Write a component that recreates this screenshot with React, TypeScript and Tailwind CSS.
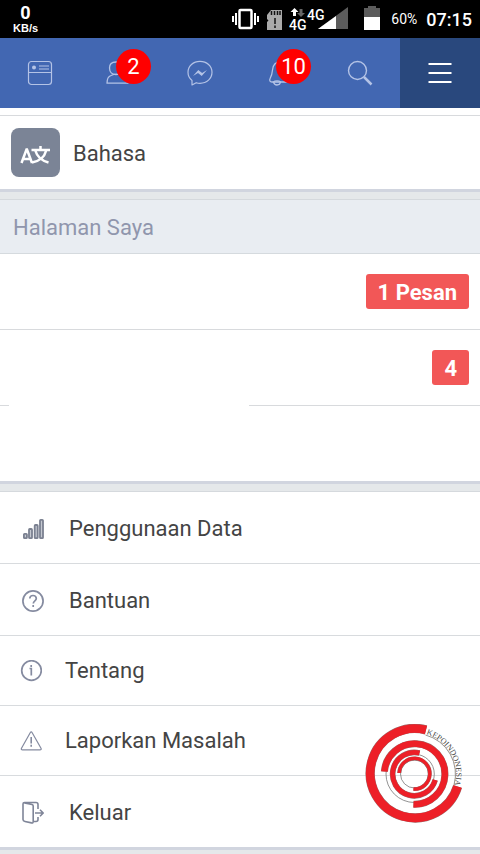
import React from 'react';

interface MenuItem {
  label: string;
  icon: React.ReactNode;
  className: string;
}

const FeedIcon = () => (
  <svg width="26" height="26" viewBox="0 0 26 26" fill="none" stroke="#b4c3e6" strokeWidth="1.2">
    <rect x="1.5" y="1.5" width="23" height="23" rx="3" />
    <path d="M1.5 12.5h23M12 6h10M12 9h10" />
    <circle cx="7" cy="7.5" r="2" fill="#b4c3e6" stroke="none" />
  </svg>
);

const FriendsIcon = () => (
  <svg width="26" height="26" viewBox="0 0 26 26" fill="none" stroke="#b4c3e6" strokeWidth="1.3">
    <path d="M6 15.500C3 16.500 2 19 2 23.200h21C23 18 20.500 16 17 15.500c-3-1.500-8-1.500-11 0z" strokeLinejoin="round" />
    <path d="M4.500 8C4.500 4 6.500 2 11 2s6.500 2 6.500 6-2.500 6.500-6.500 6.500S4.500 12 4.500 8z" />
  </svg>
);

const MessengerIcon = () => (
  <svg width="26" height="26" viewBox="0 0 26 26" fill="none" stroke="#b4c3e6" strokeWidth="1.2">
    <path d="M5 20.500v4.500l4.200-2.300c1.200.4 2.500.6 3.800.6 6.800 0 12-4.700 12-11S19.800 1.300 13 1.300 1 6 1 12.300c0 3.300 1.500 6.200 4 8.200z" strokeLinejoin="round" />
    <path d="M6 16l5.300-6 3.800 3L20 10l-5.300 6-3.700-3z" fill="#b4c3e6" stroke="none" />
  </svg>
);

const BellIcon = () => (
  <svg width="26" height="26" viewBox="0 0 26 26" fill="none" stroke="#b4c3e6" strokeWidth="1.3">
    <path d="M13 2C8 2 6 5 5.500 10c-.4 4-1 6-2.200 8C2 20.500 3 22 5 22h16c2 0 3-1.500 1.700-4-1.200-2-1.800-4-2.200-8-.5-5-2.500-8-7.500-8z" />
    <path d="M6.500 22c.5 2 1.700 3 3.500 3s3.200-1 3.500-3c-1.500-1.600-5.500-1.600-7 0z" />
  </svg>
);

const SearchIcon = () => (
  <svg width="26" height="26" viewBox="0 0 26 26" fill="none" stroke="#b4c3e6">
    <circle cx="10.500" cy="10.500" r="9" strokeWidth="1.4" />
    <path d="M17 17l7.500 7.500" strokeWidth="2.500" />
  </svg>
);

const HamburgerIcon = () => (
  <svg width="24" height="22" viewBox="0 0 24 22" stroke="#fff" strokeWidth="2">
    <path d="M0.500 2h23M0.500 11h23M0.500 20h23" />
  </svg>
);

const LanguageIcon = () => (
  <svg width="49" height="49" viewBox="0 0 49 49" fill="none" stroke="#fff" strokeWidth="2.500">
    <path d="M10.500 35l5-13.500h.5l5 13.500M12.500 31h6.500" />
    <path d="M20.500 22h18.500M29.500 18v4M24.500 23c1.500 5.500 6 9.500 13 11.500M35 23c-1.500 6-6.500 10-14 11.500" />
  </svg>
);

const DataIcon = () => (
  <svg width="22" height="22" viewBox="0 0 22 22" fill="#c4c8d0" stroke="#7b8191" strokeWidth="1.800">
    <rect x="1.900" y="15.800" width="3" height="4.300" rx=".7" />
    <rect x="7" y="11" width="3" height="9.100" rx=".7" />
    <rect x="12.700" y="7" width="3" height="13.100" rx=".7" />
    <rect x="18" y="1.800" width="3" height="18.300" rx=".7" />
  </svg>
);

const HelpIcon = () => (
  <svg width="22" height="22" viewBox="0 0 22 22" fill="none" stroke="#858ba0" strokeWidth="1.700">
    <circle cx="11" cy="11" r="10.100" />
    <path d="M7.800 8.500c0-1.700 1.200-3 3.200-3s3.300 1.200 3.300 2.900c0 2.400-3 2.400-3 5.100M11.200 15v2" />
  </svg>
);

const InfoIcon = () => (
  <svg width="22" height="22" viewBox="0 0 22 22" fill="none" stroke="#858ba0" strokeWidth="1.700">
    <circle cx="11.500" cy="10.500" r="9.800" />
    <path d="M9.500 8.500h1.800v7M11.200 5v2" />
  </svg>
);

const WarningIcon = () => (
  <svg width="22" height="22" viewBox="0 0 22 22" fill="none" stroke="#858ba0" strokeWidth="1.200">
    <path d="M10.200 2.700c.6-1 1.400-1 2 0l8.800 15.500c.5 1 0 1.700-1 1.700H2.500c-1 0-1.500-.7-1-1.700z" />
    <path d="M11.200 7v6.500M11.200 14.800v2" strokeWidth="1.600" />
  </svg>
);

const LogoutIcon = () => (
  <svg width="22" height="24" viewBox="0 0 22 24" fill="none" stroke="#7f8598" strokeWidth="1.600" strokeLinejoin="round">
    <path d="M2.500 2l7.500 1.500c.8.2 1.200.7 1.200 1.500v15.500c0 1.200-.6 1.700-1.700 1.400l-6.500-1.400c-1.300-.3-2-.9-2-2V3c0-1 .5-1.500 1.500-1.500H14c1.300 0 2 .6 2 2V8M11.500 20.500H14c1.300 0 2-.6 2-2V16" />
    <path d="M13 12h8M18 8.800l3.200 3.200-3.200 3.200" />
  </svg>
);

const rings = [
  { d: 'M61 5.900A44.700 44.700 0 1 0 92.600 62.500', width: 8.5 },
  { d: 'M19.400 47.500A30.300 30.300 0 1 1 48.500 80.300', width: 6.3 },
  { d: 'M54.500 29A21.700 21.700 0 1 0 70.200 56', width: 4.8 },
  { d: 'M34.200 49A15.300 15.300 0 1 1 48.500 65', width: 3.2 },
];

// Concentric ring emblem with its name set along the outer edge
const Emblem = () => (
  <svg
    role="img"
    aria-label="Kepoindonesia"
    className="absolute right-[15px] bottom-[23px]"
    width="100"
    height="100"
    viewBox="0 0 100 100"
    fill="none"
  >
    <g stroke="#777" strokeWidth=".8">
      <path d="M60.500 11A40.500 40.500 0 0 1 89 61" />
      <circle cx="49.500" cy="50" r="28.500" />
      <circle cx="49.500" cy="50" r="19.800" />
      <circle cx="49.500" cy="50" r="14" />
    </g>
    {rings.map((ring) => (
      <g key={ring.d}>
        <path d={ring.d} stroke="#9a6a6a" strokeWidth={ring.width + 0.8} />
        <path d={ring.d} stroke="#ed1f27" strokeWidth={ring.width} />
      </g>
    ))}
    <path id="emblem-arc" d="M61.300 10.200A41.500 41.500 0 0 1 87 68" />
    <text fill="#444" className="font-['Liberation_Serif',serif] text-[8px]">
      <textPath href="#emblem-arc">KEPOINDONESIA</textPath>
    </text>
  </svg>
);

const StatusBar = () => (
  <header className="flex h-[38px] items-center justify-between bg-black pr-2 pl-[13px] text-white">
    <div className="flex flex-col items-center">
      <span className="text-[18px] leading-[18px] font-bold">0</span>
      <span className="font-['Liberation_Sans',sans-serif] text-[11px] leading-3 font-bold">KB/s</span>
    </div>
    <div className="flex items-center">
      <svg className="mr-2" width="27" height="24" viewBox="0 0 27 24" fill="none" stroke="#fff">
        <rect x="7.500" y="3" width="12" height="18" rx="1" strokeWidth="2.500" />
        <path d="M4 6v12M23 6v12" strokeWidth="2" />
        <path d="M1 9v6M26 9v6" strokeWidth="2" />
      </svg>
      <svg className="mr-[7px]" width="15" height="24" viewBox="0 0 15 24">
        <path d="M4 3h11v20H0v-8l1.500-1.500L0 12V8z" fill="#aaa" />
        <path d="M4.500 4v4M7.500 4v4M10.500 4v4M13 4v4M8 11v6M8 18.500v2.500" stroke="#111" strokeWidth="1.500" />
      </svg>
      <svg className="mr-4" width="59" height="30" viewBox="0 0 59 30" fill="#fff">
        <path d="M5.500 4l4 4H7v4H4V8H1.500z" />
        <path d="M10.500 5h3v4h2.500l-4 4-4-4h2.500z" fill="#666" />
        <path d="M59 3v22H29z" fill="#5c5c5c" />
        <path d="M47 12v13H29z" />
        <text x="0" y="26" className="font-[Roboto,sans-serif] text-[14px] font-medium">4G</text>
        <text x="18" y="16" className="font-[Roboto,sans-serif] text-[14px] font-medium">4G</text>
      </svg>
      <svg className="mr-[11px]" width="16" height="26" viewBox="0 0 16 26">
        <path d="M4 0h8v2h4v9H0V2h4z" fill="#5c5c5c" />
        <path d="M0 11h16v13H0z" fill="#fff" />
      </svg>
      <span className="mr-[9px] text-[14px] leading-5">60%</span>
      <span className="pt-px text-[18px] leading-5 font-medium">07:15</span>
    </div>
  </header>
);

const Badge = ({ count, className }: { count: number; className: string }) => (
  <span
    className={`absolute top-[11px] flex size-[35px] items-center justify-center rounded-full bg-[#ff0000] text-[22px] leading-none text-white ${className}`}
  >
    {count}
  </span>
);

const NavBar = () => {
  const tab = 'relative flex h-full items-center justify-center';

  return (
    <nav className="grid h-[70px] grid-cols-6 bg-[#4267b2]">
      <button className={tab} aria-label="Kabar Berita">
        <FeedIcon />
      </button>
      <button className={`${tab} pr-1`} aria-label="Permintaan Pertemanan">
        <FriendsIcon />
        <Badge count={2} className="left-9" />
      </button>
      <button className={tab} aria-label="Pesan">
        <MessengerIcon />
      </button>
      <button className={tab} aria-label="Pemberitahuan">
        <BellIcon />
        <Badge count={10} className="left-9" />
      </button>
      <button className={tab} aria-label="Cari">
        <SearchIcon />
      </button>
      <button className={`${tab} bg-[#29487d]`} aria-label="Menu">
        <HamburgerIcon />
      </button>
    </nav>
  );
};

const Separator = () => (
  <div className="h-[11px] border-t-[3px] border-b border-t-[#d1d5df] border-b-[#d5d9dd] bg-[#e5e8ea]" />
);

const Counter = ({ children }: { children: React.ReactNode }) => (
  <span className="rounded-[3px] bg-[#f25757] px-3 pt-[3px] text-[22px] leading-8 font-bold text-white">
    {children}
  </span>
);

const menuItems: MenuItem[] = [
  { label: 'Penggunaan Data', icon: <DataIcon />, className: 'h-[72px] border-b pt-0.5 pl-[22px] gap-[25px]' },
  { label: 'Bantuan', icon: <HelpIcon />, className: 'h-[72px] border-b pt-0.5 pl-[22px] gap-[25px]' },
  { label: 'Tentang', icon: <InfoIcon />, className: 'h-[70px] border-b pl-5 gap-[23px]' },
  { label: 'Laporkan Masalah', icon: <WarningIcon />, className: 'h-[70px] border-b pl-5 gap-[23px]' },
  { label: 'Keluar', icon: <LogoutIcon />, className: 'h-[71px] pt-0.5 pl-[22px] gap-[25px]' },
];

export default function App() {
  return (
    <div className="min-h-screen bg-[#e5e8ea] font-[Roboto,sans-serif] text-[22px] leading-7 text-[#444]">
      <StatusBar />
      <NavBar />

      <main>
        <div className="border-b border-[#d8dadd] bg-white pt-[7px]" />
        <a href="#bahasa" className="flex h-[73px] items-center gap-[13px] bg-white pl-[11px]">
          <span className="rounded-lg bg-[#7b8496]">
            <LanguageIcon />
          </span>
          <span className="pt-0.5">Bahasa</span>
        </a>
        <Separator />

        <section>
          <h2 className="h-[54px] border-b border-[#d5dade] bg-[#e9edf2] pt-px pl-[13px] leading-[54px] text-[#9096ad]">
            Halaman Saya
          </h2>
          <div className="flex h-[76px] items-center justify-end border-b border-[#d8dadd] bg-white pr-[11px]">
            <Counter>1 Pesan</Counter>
          </div>
          <div className="flex h-[75px] items-center justify-end bg-white pr-[11px]">
            <Counter>4</Counter>
          </div>
          <div className="flex h-px justify-between bg-white">
            <div className="w-[9px] bg-[#d8dadd]" />
            <div className="ml-[240px] flex-1 bg-[#d8dadd]" />
          </div>
          <div className="h-[75px] bg-white" />
        </section>
        <Separator />

        <section className="relative bg-white">
          {menuItems.map((item) => (
            <a
              key={item.label}
              href="#menu"
              className={`flex items-center border-[#d8dbde] ${item.className}`}
            >
              {item.icon}
              {item.label}
            </a>
          ))}
          <Emblem />
        </section>
        <div className="h-[7px] border-t-[3px] border-[#d1d5df]" />
      </main>
    </div>
  );
}
